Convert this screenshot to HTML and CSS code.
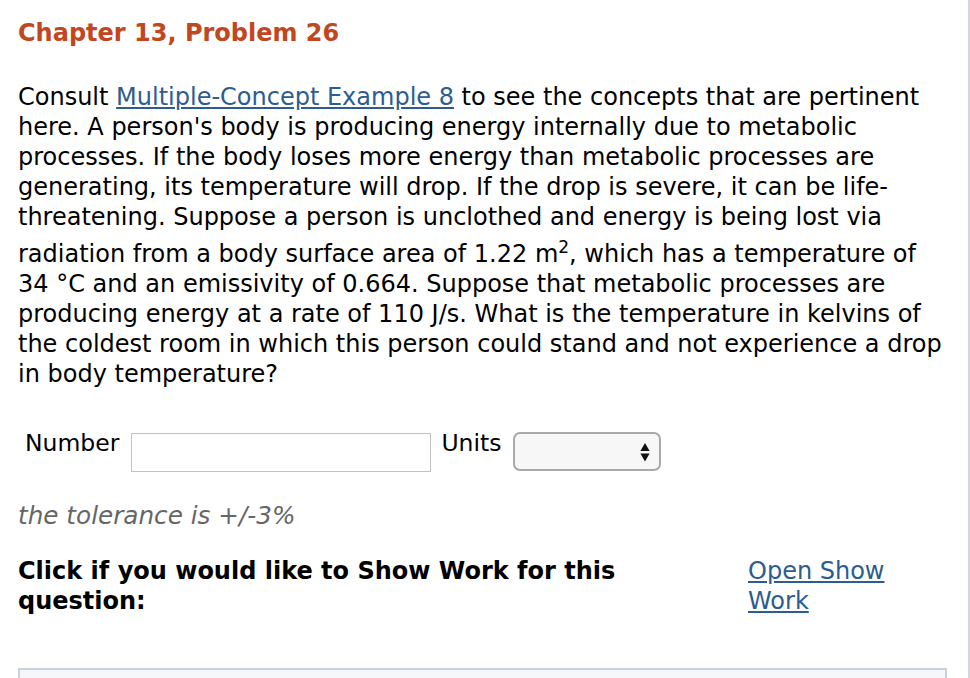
FILE: index.html
```html
<!DOCTYPE html>
<html>
<head>
<meta charset="utf-8">
<link rel="stylesheet" href="styles.css">
</head>
<body>
<div class="page">
  <h1 class="title">Chapter 13, Problem 26</h1>
  <p class="question">Consult <a href="#" class="link">Multiple-Concept Example 8</a> to see the concepts that are pertinent here. A person's body is producing energy internally due to metabolic processes. If the body loses more energy than metabolic processes are generating, its temperature will drop. If the drop is severe, it can be life-threatening. Suppose a person is unclothed and energy is being lost via radiation from a body surface area of 1.22 m<sup>2</sup>, which has a temperature of 34 °C and an emissivity of 0.664. Suppose that metabolic processes are producing energy at a rate of 110 J/s. What is the temperature in kelvins of the coldest room in which this person could stand and not experience a drop in body temperature?</p>
  <div class="answer">
    <span class="label">Number</span>
    <span class="input"></span>
    <span class="label">Units</span>
    <span class="select">
      <svg class="arrows" width="10" height="20" viewBox="0 0 10 20"><path d="M5 1 L9.6 9 L0.4 9 Z M5 19.5 L9.6 11.5 L0.4 11.5 Z" fill="#111"/></svg>
    </span>
  </div>
  <p class="tolerance">the tolerance is +/-3%</p>
  <div class="showwork">
    <div class="sw-text">Click if you would like to Show Work for this question:</div>
    <a href="#" class="sw-link">Open Show Work</a>
  </div>
  <div class="workbox"></div>
</div>
</body>
</html>
```
FILE: styles.css
```css
html, body {
  margin: 0;
  padding: 0;
  background: #fff;
}
.page {
  width: 950px;
  height: 678px;
  overflow: hidden;
  padding-left: 18px;
  border-right: 2px solid #d2d5e2;
  font-family: "DejaVu Sans", Verdana, sans-serif;
  color: #000;
}
.title {
  margin: 0;
  padding-top: 19px;
  font-size: 24px;
  line-height: 28px;
  font-weight: bold;
  color: #c2461e;
}
.question {
  margin: 35px 0 0 0;
  width: 935px;
  font-size: 24px;
  line-height: 30px;
}
.question sup {
  font-size: 17px;
  line-height: 31px;
  vertical-align: 9px;
}
.link {
  color: #2c5c90;
  text-decoration: underline;
}
.answer {
  display: flex;
  align-items: flex-start;
  margin-top: 42px;
  padding-left: 7px;
}
.label {
  font-size: 23.5px;
  line-height: 24px;
}
.input {
  width: 298px;
  height: 37px;
  border: 1px solid #c2c2c2;
  margin: 2px 10px 0 12px;
}
.select {
  width: 144px;
  height: 35px;
  border: 2px solid #a9a9a9;
  border-radius: 7px;
  background: #f7f7f7;
  margin-left: 11px;
  margin-top: 1px;
  display: flex;
  align-items: center;
  justify-content: flex-end;
}
.arrows {
  margin-right: 9px;
}
.tolerance {
  margin: 29px 0 0 0;
  font-size: 24.7px;
  line-height: 30px;
  font-style: italic;
  color: #666;
}
.showwork {
  display: flex;
  margin-top: 25px;
}
.sw-text {
  width: 730px;
  font-weight: bold;
  font-size: 24px;
  line-height: 30px;
}
.sw-text, .sw-link {
  flex: none;
}
.sw-link {
  width: 160px;
  font-size: 24px;
  line-height: 30px;
  color: #2c5c90;
  text-decoration: underline;
}
.workbox {
  margin-top: 52px;
  width: 925px;
  height: 40px;
  border: 2px solid #cbd1dc;
  background: #f5f7fa;
}
```
